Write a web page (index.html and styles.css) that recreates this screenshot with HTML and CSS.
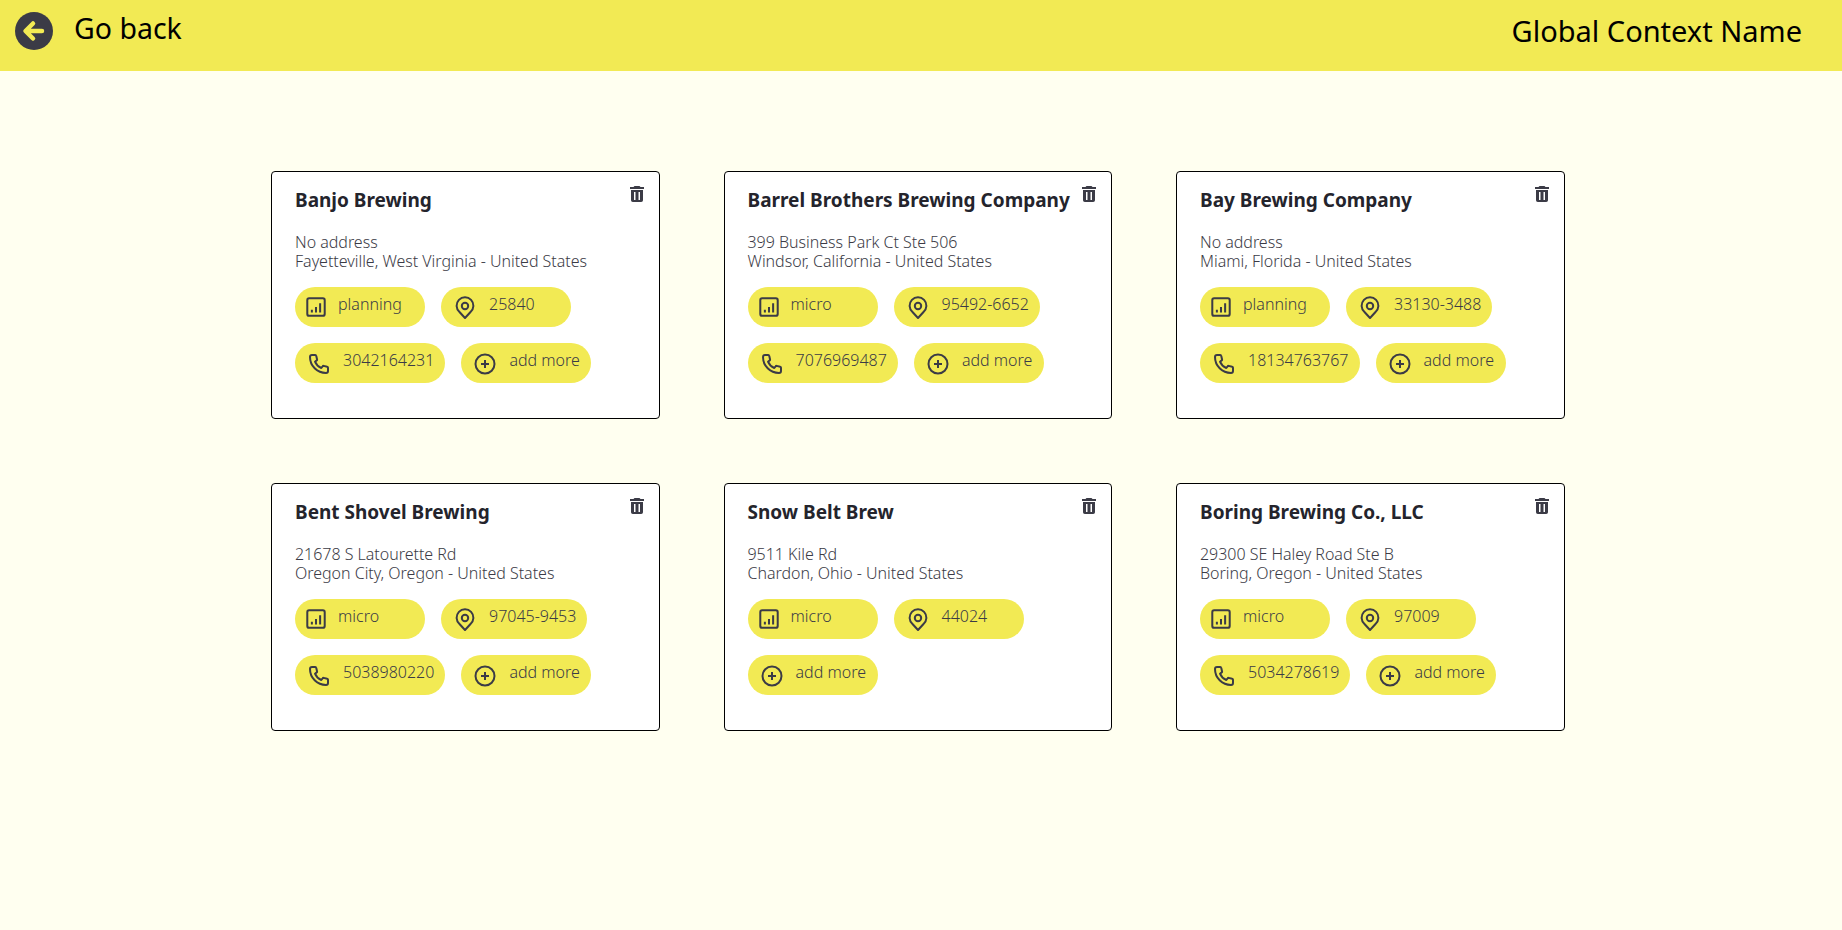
FILE: index.html
```html
<!DOCTYPE html>
<html lang="en">
<head>
<meta charset="utf-8">
<title>Breweries</title>
<link rel="stylesheet" href="styles.css">
</head>
<body>
<svg class="sprite" width="0" height="0" aria-hidden="true">
  <symbol id="i-chart" viewBox="0 0 24 24"><rect x="2.500" y="2.500" width="19" height="19" rx="2" fill="none" stroke="currentColor" stroke-width="2.200"/><path d="M7.500 18v-3M12 18v-6M16.500 18V8" fill="none" stroke="currentColor" stroke-width="2.200"/></symbol>
  <symbol id="i-pin" viewBox="0 0 24 24"><path d="M12 22l-5.500-6A8.400 8.400 0 1 1 17.500 16z" fill="none" stroke="currentColor" stroke-width="2" stroke-linejoin="round"/><circle cx="12" cy="10" r="3.200" fill="none" stroke="currentColor" stroke-width="2"/></symbol>
  <symbol id="i-phone" viewBox="0 0 24 24"><path d="M5 3h3.200a1 1 0 0 1 1 .8l.9 3.600a1 1 0 0 1-.4 1L8 9.700a11.500 11.500 0 0 0 6.300 6.300l1.300-1.700a1 1 0 0 1 1-.4l3.600.900a1 1 0 0 1 .800 1V19a2 2 0 0 1-2 2A16 16 0 0 1 3 5a2 2 0 0 1 2-2z" fill="none" stroke="currentColor" stroke-width="2" stroke-linejoin="round"/></symbol>
  <symbol id="i-plus" viewBox="0 0 24 24"><circle cx="12" cy="12" r="9.500" fill="none" stroke="currentColor" stroke-width="2"/><path d="M12 8v8M8 12h8" fill="none" stroke="currentColor" stroke-width="2"/></symbol>
  <symbol id="i-trash" viewBox="0 0 14 16"><path fill-rule="evenodd" d="M4.500 0h5l1 1H14v2H0V1h3.500zM1 4h12v10.200A1.800 1.800 0 0 1 11.200 16H2.800A1.800 1.800 0 0 1 1 14.200zM4 6v8h1.500V6zm4.500 0v8H10V6z" fill="currentColor"/></symbol>
</svg>
<header class="topbar">
  <a class="back">
    <svg class="back-icon" viewBox="0 0 38 38"><circle cx="19" cy="19" r="19" fill="#3b3b46"/><path d="M18 11.500L10.500 19l7.500 7.500M11 19h16" fill="none" stroke="#f2ea54" stroke-width="4.500" stroke-linecap="round" stroke-linejoin="round"/></svg>
    <span class="back-label">Go back</span>
  </a>
  <div class="context">Global Context Name</div>
</header>
<main class="grid">
  <article class="card">
    <svg class="trash"><use href="#i-trash"/></svg>
    <h2 class="name">Banjo Brewing</h2>
    <p class="addr">No address<br>Fayetteville, West Virginia - United States</p>
    <div class="pills">
      <span class="pill"><svg class="ic ic-chart"><use href="#i-chart"/></svg><span class="val">planning</span></span>
      <span class="pill"><svg class="ic"><use href="#i-pin"/></svg><span class="val">25840</span></span>
      <span class="pill"><svg class="ic"><use href="#i-phone"/></svg><span class="val">3042164231</span></span>
      <span class="pill"><svg class="ic"><use href="#i-plus"/></svg><span class="val">add more</span></span>
    </div>
  </article>
  <article class="card">
    <svg class="trash"><use href="#i-trash"/></svg>
    <h2 class="name">Barrel Brothers Brewing Company</h2>
    <p class="addr">399 Business Park Ct Ste 506<br>Windsor, California - United States</p>
    <div class="pills">
      <span class="pill"><svg class="ic ic-chart"><use href="#i-chart"/></svg><span class="val">micro</span></span>
      <span class="pill"><svg class="ic"><use href="#i-pin"/></svg><span class="val">95492-6652</span></span>
      <span class="pill"><svg class="ic"><use href="#i-phone"/></svg><span class="val">7076969487</span></span>
      <span class="pill"><svg class="ic"><use href="#i-plus"/></svg><span class="val">add more</span></span>
    </div>
  </article>
  <article class="card">
    <svg class="trash"><use href="#i-trash"/></svg>
    <h2 class="name">Bay Brewing Company</h2>
    <p class="addr">No address<br>Miami, Florida - United States</p>
    <div class="pills">
      <span class="pill"><svg class="ic ic-chart"><use href="#i-chart"/></svg><span class="val">planning</span></span>
      <span class="pill"><svg class="ic"><use href="#i-pin"/></svg><span class="val">33130-3488</span></span>
      <span class="pill"><svg class="ic"><use href="#i-phone"/></svg><span class="val">18134763767</span></span>
      <span class="pill"><svg class="ic"><use href="#i-plus"/></svg><span class="val">add more</span></span>
    </div>
  </article>
  <article class="card">
    <svg class="trash"><use href="#i-trash"/></svg>
    <h2 class="name">Bent Shovel Brewing</h2>
    <p class="addr">21678 S Latourette Rd<br>Oregon City, Oregon - United States</p>
    <div class="pills">
      <span class="pill"><svg class="ic ic-chart"><use href="#i-chart"/></svg><span class="val">micro</span></span>
      <span class="pill"><svg class="ic"><use href="#i-pin"/></svg><span class="val">97045-9453</span></span>
      <span class="pill"><svg class="ic"><use href="#i-phone"/></svg><span class="val">5038980220</span></span>
      <span class="pill"><svg class="ic"><use href="#i-plus"/></svg><span class="val">add more</span></span>
    </div>
  </article>
  <article class="card">
    <svg class="trash"><use href="#i-trash"/></svg>
    <h2 class="name">Snow Belt Brew</h2>
    <p class="addr">9511 Kile Rd<br>Chardon, Ohio - United States</p>
    <div class="pills">
      <span class="pill"><svg class="ic ic-chart"><use href="#i-chart"/></svg><span class="val">micro</span></span>
      <span class="pill"><svg class="ic"><use href="#i-pin"/></svg><span class="val">44024</span></span>
      <span class="pill"><svg class="ic"><use href="#i-plus"/></svg><span class="val">add more</span></span>
    </div>
  </article>
  <article class="card">
    <svg class="trash"><use href="#i-trash"/></svg>
    <h2 class="name">Boring Brewing Co., LLC</h2>
    <p class="addr">29300 SE Haley Road Ste B<br>Boring, Oregon - United States</p>
    <div class="pills">
      <span class="pill"><svg class="ic ic-chart"><use href="#i-chart"/></svg><span class="val">micro</span></span>
      <span class="pill"><svg class="ic"><use href="#i-pin"/></svg><span class="val">97009</span></span>
      <span class="pill"><svg class="ic"><use href="#i-phone"/></svg><span class="val">5034278619</span></span>
      <span class="pill"><svg class="ic"><use href="#i-plus"/></svg><span class="val">add more</span></span>
    </div>
  </article>
</main>
</body>
</html>
```
FILE: styles.css
```css
* { box-sizing: border-box; }
html, body { margin: 0; height: 100%; }
body {
  background: #fffff0;
  font-family: "Noto Sans", "Open Sans", sans-serif;
  color: #3b3b46;
  overflow: hidden;
}
.sprite { position: absolute; }
.topbar {
  height: 71px;
  background: #f2ea54;
  display: flex;
  justify-content: space-between;
  padding: 0 40px 0 15px;
  color: #000;
  font-size: 29px;
}
.back { display: flex; align-items: flex-start; }
.back-icon { width: 38px; height: 38px; margin-top: 12px; }
.back-label { margin-left: 21px; margin-top: 9px; line-height: 38px; font-size: 28.500px; }
.context { margin-top: 12px; line-height: 38px; }
.grid {
  display: grid;
  grid-template-columns: repeat(3, 388.500px);
  grid-auto-rows: 248px;
  column-gap: 64px;
  row-gap: 64px;
  padding: 100px 0 0 271px;
}
.card {
  position: relative;
  background: #fff;
  border: 1px solid #000;
  border-radius: 4px;
  padding: 16px 23px;
}
.trash { position: absolute; top: 14px; right: 15px; width: 14px; height: 16px; }
.name {
  margin: 0;
  font-size: 19px;
  font-weight: 700;
  line-height: 24px;
  color: #24242c;
  white-space: nowrap;
}
.addr {
  margin: 21px 0 0;
  font-size: 16px;
  font-weight: 300;
  line-height: 19px;
  letter-spacing: -0.02px;
}
.pills { display: flex; flex-wrap: wrap; gap: 16px; margin-top: 16px; }
.pill {
  display: flex;
  align-items: flex-start;
  min-width: 130px;
  height: 40px;
  padding: 0 11px 0 12px;
  border-radius: 20px;
  background: #f2ea54;
  font-size: 16px;
  font-weight: 300;
  line-height: 34px;
}
.ic { width: 24px; height: 24px; margin-top: 9px; margin-right: 12px; flex: none; }
.ic-chart { width: 22px; height: 22px; margin-top: 9px; margin-left: -2px; margin-right: 11px; }
```
